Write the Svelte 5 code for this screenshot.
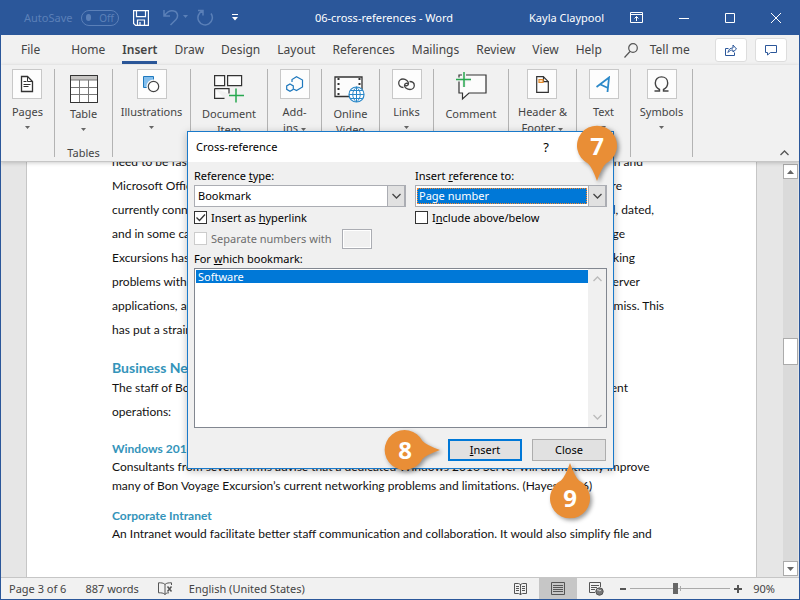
<script lang="ts">
    type Group = { label: string; second?: string; width: number; icon: string; boxed: boolean; caret?: 'inline' | 'below'; title?: string };

    const tabs = ['Home', 'Insert', 'Draw', 'Design', 'Layout', 'References', 'Mailings', 'Review', 'View', 'Help'];
    const groups: Group[] = [
        { label: 'Pages', width: 54, icon: 'pages', boxed: true, caret: 'below' },
        { label: 'Table', width: 58, icon: 'table', boxed: false, caret: 'below', title: 'Tables' },
        { label: 'Illustrations', width: 78, icon: 'shapes', boxed: true, caret: 'below' },
        { label: 'Document', second: 'Item', width: 77, icon: 'document', boxed: false },
        { label: 'Add-', second: 'ins', width: 54, icon: 'addins', boxed: true, caret: 'inline' },
        { label: 'Online', second: 'Video', width: 58, icon: 'video', boxed: false },
        { label: 'Links', width: 54, icon: 'links', boxed: true, caret: 'below' },
        { label: 'Comment', width: 75, icon: 'comment', boxed: false },
        { label: 'Header &', second: 'Footer', width: 68, icon: 'header', boxed: true, caret: 'inline' },
        { label: 'Text', width: 54, icon: 'text', boxed: true, caret: 'below' },
        { label: 'Symbols', width: 62, icon: 'omega', boxed: true, caret: 'below' }
    ];

    // each line runs behind the dialog, width is where it ends
    const lines = [
        { start: 'need to be fast and', end: 'in and', width: 531 },
        { start: 'Microsoft Office and', end: 'are', width: 510 },
        { start: 'currently connected', end: 'old, dated,', width: 542 },
        { start: 'and in some cases', end: 'Voyage', width: 513 },
        { start: 'Excursions has had', end: 'networking', width: 523 },
        { start: 'problems with its', end: 'server', width: 528 },
        { start: 'applications, and', end: 'remiss. This', width: 552 },
        { start: 'has put a strain on', end: '', width: 552 }
    ];
    const callouts = [
        { number: 7, x: 597, y: 146, angle: 0 },
        { number: 8, x: 405, y: 450, angle: -90 },
        { number: 9, x: 570, y: 498, angle: 180 }
    ];

    let hyperlink = $state(true);
    let aboveBelow = $state(false);
    let zoom = $state(90);
</script>

{#snippet caret()}
    <svg class="caret" width="5" height="3" viewBox="0 0 5 3"><path d="M0 0h5L2.500 3z" fill="#666" /></svg>
{/snippet}

{#snippet chevron(color: string, up: boolean)}
    <svg width="9" height="6" viewBox="0 0 9 6" fill="none" stroke={color} stroke-width="1.300">
        <path d={up ? 'M.5 5 4.500 1 8.500 5' : 'M.5 1 4.500 5 8.500 1'} />
    </svg>
{/snippet}

{#snippet ribbonIcon(name: string)}
    {#if name === 'pages'}
        <svg width="14" height="18" viewBox="0 0 14 18" fill="none" stroke="#333">
            <path d="M1.500 1.500h6l5 5v10h-11z" fill="#fff" stroke-width="1.300" />
            <path d="M7.500 1.500v5h5M3.500 6.500h3M3.500 9.500h7M3.500 11.500h5" />
        </svg>
    {:else if name === 'table'}
        <svg width="28" height="28" viewBox="0 0 28 28" fill="#fff" stroke="#333">
            <path d="M.5.5h27v27H.5z" />
            <path d="M1 1h26v4H1z" fill="#c8c6c4" stroke="none" />
            <path d="M.5 5h27M.5 12.500h27M.5 19.500h27M9.500 5v22M18.500 5v22" fill="none" stroke="#777" />
            <path d="M.5.5h27v27H.5z" fill="none" />
        </svg>
    {:else if name === 'shapes'}
        <svg width="17" height="17" viewBox="0 0 17 17">
            <path d="M.5.5h10v11H.5z" fill="#83beec" stroke="#1e78bd" />
            <circle cx="10.500" cy="10.500" r="7" fill="#fafafa" />
            <circle cx="10.500" cy="10.500" r="5.200" fill="#fff" stroke="#444" stroke-width="1.200" />
        </svg>
    {:else if name === 'document'}
        <svg width="30" height="28" viewBox="0 0 30 28" fill="#fcfcfc" stroke="#333" stroke-width="1.200">
            <path d="M.6.6h10v10H.6zM13.600.6h14v10h-14zM.6 13.600h14.400v5M10.500 23.400H.6V13.600" />
            <path d="M22 13.500v14M15 20.500h15" stroke="#27a84f" stroke-width="1.500" />
        </svg>
    {:else if name === 'addins'}
        <svg width="18" height="16" viewBox="0 0 18 16" fill="none" stroke="#1e78bd" stroke-width="1.200">
            <path d="M6 6V3.500L10.500.800 16.500 4v7L10.500 14.500 8 13.200" />
            <path d="m4 8 3.300 1.900v3.500L4 15.200.700 13.400V9.900z" />
        </svg>
    {:else if name === 'video'}
        <svg width="32" height="27" viewBox="0 0 32 27" fill="none" stroke="#333">
            <path d="M1 1h27v19.500H1z" fill="#fcfcfc" stroke-width="1.300" />
            <path d="M4.500 2v18M25.500 2v8" stroke-width="2" stroke-dasharray="2 3" />
            <circle cx="22.500" cy="18.500" r="7.500" fill="#fff" stroke="#2b88c8" stroke-width="1.200" />
            <path d="M15 18.500h15M16.500 14.500h12M16.500 22.500h12M22.500 11v15M22.500 11c-5 4-5 11 0 15c5-4 5-11 0-15" stroke="#2b88c8" />
        </svg>
    {:else if name === 'links'}
        <svg width="17" height="13" viewBox="0 0 17 13" fill="none" stroke="#444" stroke-width="1.300">
            <path d="M5.500 9.500C2 9.500.700 7 .700 5S2.500 1 5 1c3 0 5.500 2.500 5.500 4.500c0 2-2.500 3-4 1.500" />
            <path d="M11.500 3.500c3.500 0 4.800 2 4.800 4S14.500 11.500 12 11.500c-3 0-5.500-2-5.500-4c0-2 2.500-3 4-1.500" />
        </svg>
    {:else if name === 'comment'}
        <svg width="31" height="32" viewBox="0 0 31 32" fill="none" stroke="#333" stroke-width="1.200">
            <path d="M3 4h27v18H13l-6.500 6V22H3z" fill="#fcfcfc" />
            <path d="M0 8.500h15M8 1v15" stroke="#f1f1f1" stroke-width="4" />
            <path d="M0 8.500h15M8 1v15" stroke="#27a84f" stroke-width="1.500" />
        </svg>
    {:else if name === 'header'}
        <svg width="13" height="17" viewBox="0 0 13 17" fill="none" stroke="#333" stroke-width="1.200">
            <path d="M.7.7h6.600l5 5v10.600H.7z" fill="#fff" />
            <path d="M7.500.7v5h5" />
            <path d="M3 3.500h4v3H3z" fill="#fbd9b0" stroke="#e58a2c" />
        </svg>
    {:else if name === 'text'}
        <svg width="15" height="17" viewBox="0 0 15 17" fill="none" stroke="#2b88c8" stroke-width="1.800">
            <path d="M.5 11 13 1.500 11.500 16M4.500 8.500 12 12" />
        </svg>
    {:else}
        <svg width="15" height="16" viewBox="0 0 15 16" fill="none" stroke="#444" stroke-width="1.400">
            <path d="M.5 15h5v-1.500C2.500 12 1.300 9.500 1.300 7C1.300 3.300 4 .9 7.500.9S13.700 3.300 13.700 7c0 2.500-1.200 5-4.200 6.500V15h5" />
        </svg>
    {/if}
{/snippet}

<div class="window">
    <header class="titlebar">
        <div class="quick">
            <span class="faded">AutoSave</span>
            <button class="switch" aria-label="AutoSave" disabled><i></i>Off</button>
            <button class="plain save" aria-label="Save">
                <svg width="16" height="16" viewBox="0 0 16 16" fill="none" stroke="#fff" stroke-width="1.200">
                    <path d="M.6.6h14.800v14.800H2.600l-2-2zM3.500.6v6h9v-6M4.500 15.400V10h7v5.400M7 12v3" />
                </svg>
            </button>
            <button class="plain" aria-label="Undo" disabled>
                <svg width="25" height="17" viewBox="0 0 25 17" fill="none" stroke="#5b80b8" stroke-width="1.500">
                    <path d="M1 1v6h6M1.500 6.500C4 3 7.500 1 11 2c4 1 4.500 6 2 8.500L7.500 16" />
                    <path d="M20 6h5l-2.500 3z" fill="#5b80b8" stroke="none" />
                </svg>
            </button>
            <button class="plain" aria-label="Redo" disabled>
                <svg width="17" height="17" viewBox="0 0 17 17" fill="none" stroke="#5b80b8" stroke-width="1.500">
                    <path d="M1 1.500h5v5M14 4.500a7.200 7.200 0 1 1-8.500-2.500" />
                </svg>
            </button>
            <button class="plain more" aria-label="Customize">
                <svg width="6" height="7" viewBox="0 0 6 7" fill="#fff"><path d="M0 0h6v1H0zM0 3h6L3 6.500z" /></svg>
            </button>
        </div>
        <span class="filename">06-cross-references - Word</span>
        <span class="user">Kayla Claypool</span>
        <div class="controls">
            <button class="plain" aria-label="Ribbon options">
                <svg width="13" height="11" viewBox="0 0 13 11" fill="none" stroke="#fff"><path d="M.5.5h12v10H.5zM.5 2.500h12M6.500 9V4.500M4.500 6.500l2-2 2 2" /></svg>
            </button>
            <button class="plain" aria-label="Minimize">
                <svg width="10" height="10" viewBox="0 0 10 10" stroke="#fff"><path d="M0 5.500h10" /></svg>
            </button>
            <button class="plain" aria-label="Maximize">
                <svg width="10" height="10" viewBox="0 0 10 10" fill="none" stroke="#fff"><path d="M.5.5h9v9h-9z" /></svg>
            </button>
            <button class="plain" aria-label="Close window">
                <svg width="10" height="10" viewBox="0 0 10 10" stroke="#fff"><path d="m0 0 10 10M10 0 0 10" /></svg>
            </button>
        </div>
    </header>

    <nav class="tabs">
        <button class="plain file">File</button>
        {#each tabs as tab}
            <button class="plain" class:active={tab === 'Insert'}>{tab}</button>
        {/each}
        <button class="plain tell">
            <svg width="14" height="15" viewBox="0 0 14 15" fill="none" stroke="#555" stroke-width="1.200"><circle cx="9" cy="5" r="4.300" /><path d="M6 8.500.5 14.500" /></svg>
            Tell me
        </button>
        <div class="actions">
            <button class="action" aria-label="Share">
                <svg width="12" height="12" viewBox="0 0 12 12" fill="none" stroke="#2b579a"><path d="M3.500 4.500h-3v7h9v-3M3 8.500c.500-3 2-4.500 5-4.500V1l3.500 4L8 8V6C6 6 4.500 6.500 3 8.500z" /></svg>
            </button>
            <button class="action" aria-label="Comments">
                <svg width="12" height="11" viewBox="0 0 12 11" fill="none" stroke="#2b579a"><path d="M.5.5h11v7h-6l-3 2.500V7.500h-2z" /></svg>
            </button>
        </div>
    </nav>

    <section class="ribbon" aria-label="Insert">
        {#each groups as group}
            <div class="group" style="width: {group.width}px">
                <button class="plain tool" class:boxed={group.boxed}>
                    <span class="icon">{@render ribbonIcon(group.icon)}</span>
                    <span>{group.label}</span>
                    {#if group.second}
                        <span>{group.second}{#if group.caret === 'inline'}{@render caret()}{/if}</span>
                    {:else if group.caret}
                        <span class="below">{@render caret()}</span>
                    {/if}
                </button>
                {#if group.title}<span class="title">{group.title}</span>{/if}
            </div>
        {/each}
        <button class="plain collapse" aria-label="Collapse ribbon">{@render chevron('#555', true)}</button>
    </section>

    <main class="workspace">
        <article class="page">
            <div class="scrolled">
                {#each lines as line}
                    <p class="wide" style="width: {line.width}px"><span>{line.start}</span><span>{line.end}</span></p>
                {/each}
                <h1>Business Needs</h1>
                <p class="wide staff"><span>The staff of Bon</span><span>different</span></p>
                <p class="wide">operations:</p>
                <h2>Windows 2016 Server</h2>
                <p>Consultants from several firms advise that a dedicated Windows 2016 Server will dramatically improve</p>
                <p>many of Bon Voyage Excursion’s current networking problems and limitations. (Hayes 2016)</p>
                <h2 class="second">Corporate Intranet</h2>
                <p>An Intranet would facilitate better staff communication and collaboration. It would also simplify file and</p>
            </div>
        </article>
        <div class="scrollbar">
            <button aria-label="Scroll up"><svg width="7" height="4" viewBox="0 0 7 4"><path d="M0 4h7L3.500 0z" fill="#666" /></svg></button>
            <i></i>
            <button aria-label="Scroll down"><svg width="7" height="4" viewBox="0 0 7 4"><path d="M0 0h7L3.500 4z" fill="#666" /></svg></button>
        </div>
    </main>

    <footer class="status">
        <span class="pages">Page 3 of 6</span>
        <span class="words">887 words</span>
        <svg class="proof" width="15" height="13" viewBox="0 0 15 13" fill="none" stroke="#555"><path d="M7 2.500C5.500.8 3 .8.5.8v10c2.500 0 5 0 6.500 1.700C8.500 11 9 10.800 11 10.800M7 2.500v10M7 2.500C8.500.8 11 .8 13.500.8V3" /><path d="m9.500 4.500 4 5M13.500 4.500l-4 5" stroke-width="1.500" /></svg>
        <span>English (United States)</span>
        <div class="views">
            <button class="plain" aria-label="Read mode">
                <svg width="13" height="12" viewBox="0 0 13 12" fill="none" stroke="#555"><path d="M.5.5h4l2 1 2-1h4v10h-4l-2 1-2-1h-4zM6.500 1v11M2 3.500h3M2 5.500h3M2 7.500h3M8 3.500h3M8 5.500h3M8 7.500h3" /></svg>
            </button>
            <button class="plain current" aria-label="Print layout">
                <svg width="14" height="13" viewBox="0 0 14 13" fill="none" stroke="#555"><path d="M.5.5h13v12H.5zM2 3.500h10M2 5.500h10M2 7.500h10M2 9.500h10" /></svg>
            </button>
            <button class="plain" aria-label="Web layout">
                <svg width="15" height="14" viewBox="0 0 15 14" fill="none" stroke="#555"><path d="M6 10.500H.5V.5h11V5M2 3.500h8M2 5.500h6M2 7.500h4" /><circle cx="10.500" cy="9.500" r="3.700" fill="#777" /><path d="M8 8c2-1 2 2 4 0" stroke="#f1f1f1" /></svg>
            </button>
        </div>
        <button class="plain step" aria-label="Zoom out" onclick={() => (zoom -= 10)}><svg width="8" height="8" viewBox="0 0 8 8"><path d="M1 3h6v2H1z" fill="#555" /></svg></button>
        <input class="slider" type="range" min="10" max="187" aria-label="Zoom" bind:value={zoom} />
        <button class="plain step" aria-label="Zoom in" onclick={() => (zoom += 10)}><svg width="8" height="8" viewBox="0 0 8 8"><path d="M0 3h3V0h2v3h3v2H5v3H3V5H0z" fill="#555" /></svg></button>
        <span class="percent">{zoom}%</span>
    </footer>

    <div class="dialog" role="dialog" aria-labelledby="dialog-title">
        <div class="heading">
            <span id="dialog-title">Cross-reference</span>
            <button class="plain" aria-label="Help">?</button>
        </div>
        <form class="body" onsubmit={(e) => e.preventDefault()}>
            <div class="columns">
                <div class="column">
                    <label for="type">Reference <u>t</u>ype:</label>
                    <div class="combo">
                        <select id="type"><option>Bookmark</option></select>
                        <span class="arrow">{@render chevron('#444', false)}</span>
                    </div>
                    <label class="check"><input type="checkbox" bind:checked={hyperlink} /><span>Insert as <u>h</u>yperlink</span></label>
                    <div class="separate">
                        <label class="check disabled"><input type="checkbox" disabled /><span>Separate numbers with</span></label>
                        <input class="separator" type="text" aria-label="Separator" disabled />
                    </div>
                </div>
                <div class="column narrow">
                    <label for="target">Insert <u>r</u>eference to:</label>
                    <div class="combo">
                        <select id="target" class="focused"><option>Page number</option></select>
                        <span class="arrow">{@render chevron('#444', false)}</span>
                    </div>
                    <label class="check"><input type="checkbox" bind:checked={aboveBelow} /><span>I<u>n</u>clude above/below</span></label>
                </div>
            </div>
            <span class="which" id="which">For <u>w</u>hich bookmark:</span>
            <div class="listbox">
                <ul role="listbox" aria-labelledby="which">
                    <li role="option" aria-selected="true">Software</li>
                </ul>
                <div class="rail">{@render chevron('#bbb', true)}{@render chevron('#bbb', false)}</div>
            </div>
            <div class="buttons">
                <button class="default"><u>I</u>nsert</button>
                <button type="button">Close</button>
            </div>
        </form>
    </div>

    {#each callouts as callout}
        <div class="callout" style="left: {callout.x}px; top: {callout.y}px">
            <svg width="80" height="80" viewBox="-40 -40 80 80">
                <path transform="rotate({callout.angle})" d="M-9 17.500A20 20 0 1 1 9 17.500Q5 21 0 35Q-5 21-9 17.500z" fill="#e98e36" />
            </svg>
            <b>{callout.number}</b>
        </div>
    {/each}
</div>

<style>
    :global(body) {
        margin: 0;
    }
    .window {
        position: relative;
        display: flex;
        flex-direction: column;
        box-sizing: border-box;
        height: 100vh;
        overflow: hidden;
        border: 1px solid #2b579a;
        border-top: none;
        background: #f1f1f1;
        color: #444;
        font-family: "Noto Sans", "Open Sans", sans-serif;
        font-size: 11px;
        line-height: 16px;
    }
    button, input, select {
        font: inherit;
        color: inherit;
    }
    svg {
        display: block;
        flex: none;
    }
    .plain {
        display: flex;
        align-items: center;
        justify-content: center;
        padding: 0;
        border: none;
        background: none;
        white-space: nowrap;
    }
    .titlebar {
        display: flex;
        align-items: center;
        flex: none;
        height: 35px;
        background: #2b579a;
        color: #fff;
    }
    .quick {
        display: flex;
        align-items: center;
        flex: 1;
        padding-left: 23px;
    }
    .faded {
        width: 57px;
        color: #5b80b8;
    }
    .switch {
        display: flex;
        align-items: center;
        gap: 8px;
        width: 38px;
        height: 16px;
        padding: 0 4px;
        border: 1px solid #5b80b8;
        border-radius: 8px;
        background: none;
        color: #5b80b8;
        font-size: 10px;
    }
    .switch i {
        width: 7px;
        height: 7px;
        border-radius: 50%;
        background: #5b80b8;
    }
    .quick .plain {
        margin-right: 9px;
    }
    .quick .save {
        margin: 0 14px;
    }
    .quick .more {
        margin: 0 0 0 9px;
    }
    .filename {
        margin-right: 76px;
    }
    .user {
        padding-right: 26px;
    }
    .controls {
        display: flex;
        gap: 36px;
        padding-right: 18px;
    }
    .tabs {
        display: flex;
        align-items: center;
        gap: 17px;
        flex: none;
        height: 30px;
        padding: 0 12px 0 20px;
        font-size: 12px;
    }
    .tabs .plain {
        height: 28px;
        box-sizing: border-box;
        border-top: 3px solid transparent;
        border-bottom: 3px solid transparent;
    }
    .tabs .file {
        margin-right: 14px;
    }
    .tabs .active {
        border-bottom-color: #2b579a;
        font-weight: 600;
    }
    .tabs .tell {
        gap: 12px;
        margin-left: 5px;
    }
    .actions {
        display: flex;
        gap: 8px;
        margin-left: auto;
    }
    .action {
        display: grid;
        place-items: center;
        width: 32px;
        height: 24px;
        padding: 0;
        border: 1px solid #ddd;
        border-radius: 3px;
        background: #fff;
    }
    .ribbon {
        position: relative;
        z-index: 1;
        display: flex;
        flex: none;
        height: 96px;
        border-bottom: 1px solid #c6c6c6;
        box-shadow: 0 1px 4px rgba(0, 0, 0, 0.2);
        background: #f1f1f1;
    }
    .group {
        display: flex;
        flex-direction: column;
        align-items: center;
        flex: none;
        box-sizing: border-box;
        height: 88px;
        margin-top: 4px;
        border-right: 1px solid #b3b3b3;
    }
    .tool {
        flex-direction: column;
    }
    .icon {
        display: grid;
        place-items: end center;
        box-sizing: border-box;
        height: 34px;
        margin-bottom: 3px;
    }
    .boxed .icon {
        place-items: center;
        width: 30px;
        height: 30px;
        margin-bottom: 5px;
        border: 1px solid #c8c8c8;
        background: #fdfdfd;
    }
    .caret {
        display: inline-block;
        margin-left: 3px;
        vertical-align: middle;
    }
    .below .caret {
        display: block;
        margin: 6px 0 0;
    }
    .title {
        margin-top: auto;
        margin-bottom: -4px;
    }
    .collapse {
        align-self: flex-end;
        margin: 0 10px 5px auto;
    }
    .workspace {
        display: flex;
        flex: 1;
        min-height: 0;
        background: #e6e6e6;
    }
    .page {
        flex: 1;
        overflow: hidden;
        margin: 0 26px 0 25px;
        padding-left: 85px;
        border: 1px solid #c6c6c6;
        border-width: 0 1px;
        background: #fff;
        color: #111;
        font-family: Lato, "Open Sans", sans-serif;
        font-size: 12px;
        white-space: nowrap;
    }
    .scrolled {
        margin-top: -12px;
    }
    p {
        margin: 0;
        line-height: 19px;
    }
    .wide {
        display: flex;
        justify-content: space-between;
        line-height: 24px;
    }
    .staff {
        width: 516px;
    }
    h1, h2 {
        margin: 17px 0 0;
        color: #3494ba;
        font-size: 12px;
        line-height: 16px;
    }
    h1 {
        margin-top: 18px;
        font-size: 14px;
    }
    h2.second {
        margin-top: 13px;
    }
    .scrollbar {
        display: flex;
        flex-direction: column;
        justify-content: space-between;
        align-items: center;
        width: 15px;
        margin: 2px 1px 1px 0;
        background: #dadada;
    }
    .scrollbar button {
        display: grid;
        place-items: center;
        box-sizing: border-box;
        width: 15px;
        height: 15px;
        padding: 0;
        border: 1px solid #ababab;
        background: #fff;
    }
    .scrollbar i {
        box-sizing: border-box;
        width: 15px;
        height: 27px;
        margin-bottom: 38px;
        border: 1px solid #ababab;
        background: #fff;
    }
    .status {
        display: flex;
        align-items: center;
        flex: none;
        box-sizing: border-box;
        height: 22px;
        border-top: 1px solid #c6c6c6;
    }
    .pages {
        margin: 0 19px 0 8px;
    }
    .proof {
        margin: 0 16px 0 19px;
    }
    .views {
        display: flex;
        align-self: stretch;
        margin-left: auto;
    }
    .views button {
        width: 38px;
    }
    .views .current {
        background: #c6c6c6;
    }
    .step {
        margin: 0 3px 0 4px;
    }
    .slider {
        width: 100px;
        height: 16px;
        margin: 0;
        appearance: none;
        background: linear-gradient(#aaa, #aaa) center / 100% 1px no-repeat, linear-gradient(#aaa, #aaa) center / 1px 5px no-repeat;
    }
    .slider::-webkit-slider-thumb {
        appearance: none;
        width: 5px;
        height: 11px;
        background: #666;
    }
    .percent {
        margin: 0 24px 0 8px;
    }
    .dialog {
        position: absolute;
        z-index: 2;
        top: 131px;
        left: 186px;
        box-sizing: border-box;
        width: 427px;
        border: 1px solid #1979ca;
        box-shadow: 0 2px 8px rgba(0, 0, 0, 0.25);
        background: #f0f0f0;
        color: #000;
    }
    .heading {
        display: flex;
        align-items: center;
        justify-content: space-between;
        height: 30px;
        padding: 0 64px 0 8px;
        background: #fff;
    }
    .heading button {
        font-size: 13px;
    }
    .body {
        padding: 6px;
    }
    .columns {
        display: flex;
        gap: 9px;
    }
    .column {
        flex: 212;
    }
    .narrow {
        flex: 192;
    }
    .column > label {
        display: block;
    }
    .combo {
        display: flex;
        box-sizing: border-box;
        height: 22px;
        margin-top: 1px;
        border: 1px solid #abadb3;
        background: #fff;
    }
    .combo select {
        flex: 1;
        min-width: 0;
        margin: 2px;
        padding: 0 1px;
        border: none;
        outline: none;
        appearance: none;
        background: #fff;
        line-height: 16px;
    }
    .combo .focused {
        margin: 2px 1px;
        border: 1px dotted #ff8728;
        background: #0078d7;
        color: #fff;
        line-height: 14px;
    }
    .arrow {
        display: grid;
        place-items: center;
        width: 16px;
        border: 1px solid #abadb3;
        border-width: 0 1px 0 1px;
        background: #e1e1e1;
    }
    .column > .check, .separate .check {
        display: flex;
        align-items: center;
        gap: 4px;
    }
    .check {
        height: 21px;
    }
    .check input {
        box-sizing: border-box;
        width: 13px;
        height: 13px;
        margin: 0;
        appearance: none;
        border: 1px solid #333;
        background: #fff;
    }
    .check input:checked {
        background: #fff url("data:image/svg+xml,%3Csvg xmlns='http://www.w3.org/2000/svg' viewBox='0 0 11 11'%3E%3Cpath d='M1.500 5.500 4.500 8.500 10 2.500' fill='none' stroke='%23333' stroke-width='1.300'/%3E%3C/svg%3E");
    }
    .disabled {
        color: #6d6d6d;
    }
    .disabled input {
        border-color: #ccc;
    }
    .separate {
        display: flex;
        align-items: center;
        gap: 11px;
    }
    .separator {
        box-sizing: border-box;
        width: 30px;
        height: 20px;
        border: 1px solid #abadb3;
        box-shadow: inset 0 0 0 1px #fff;
        background: #f0f0f0;
    }
    .which {
        display: block;
        height: 19px;
        line-height: 19px;
    }
    .listbox {
        display: flex;
        box-sizing: border-box;
        height: 160px;
        border: 1px solid #828790;
        background: #fff;
    }
    ul {
        flex: 1;
        margin: 1px 0 0 1px;
        padding: 0;
        list-style: none;
    }
    li {
        height: 13px;
        padding-left: 2px;
        background: #0078d7;
        color: #fff;
        line-height: 14px;
    }
    .rail {
        display: flex;
        flex-direction: column;
        justify-content: space-between;
        align-items: center;
        width: 18px;
        padding: 7px 0;
        background: #f0f0f0;
    }
    .buttons {
        display: flex;
        justify-content: flex-end;
        gap: 10px;
        padding: 11px 1px 1px 0;
    }
    .buttons button {
        width: 74px;
        height: 22px;
        padding: 0;
        border: 1px solid #adadad;
        background: #e1e1e1;
    }
    .buttons .default {
        border: 2px solid #0078d7;
    }
    .callout {
        position: absolute;
        z-index: 3;
        display: grid;
        place-items: center;
        width: 80px;
        height: 80px;
        margin: -40px 0 0 -41px;
        pointer-events: none;
    }
    .callout svg, .callout b {
        grid-area: 1 / 1;
    }
    .callout svg {
        filter: drop-shadow(2px 2px 2px rgba(0, 0, 0, 0.4));
    }
    .callout b {
        z-index: 1;
        color: #fff;
        font-family: "Open Sans", sans-serif;
        font-size: 24px;
        line-height: 24px;
    }
</style>
